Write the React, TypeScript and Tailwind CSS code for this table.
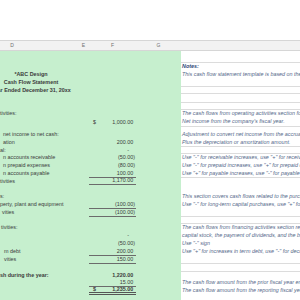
import React from "react";

type Row = {
  h: number;
  title?: string;
  label?: string;
  lx?: number;
  bold?: boolean;
  dollar?: boolean;
  value?: string;
  paren?: boolean;
  dash?: boolean;
  fb?: "single" | "double";
  note?: string;
  noteBold?: boolean;
  rb?: boolean;
};

const rows: Row[] = [
  { h: 12, rb: true },
  { h: 8, note: "Notes:", noteBold: true },
  { h: 8, title: "*ABC Design", note: "This cash flow statement template is based on the indirect method." },
  { h: 8, title: "Cash Flow Statement", rb: true },
  { h: 7, title: "Year Ended December 31, 20xx", rb: true },
  { h: 9, rb: true },
  { h: 7, rb: true },
  { h: 8, label: "tivities:", lx: 0, note: "The cash flows from operating activities section focuses on" },
  { h: 9, dollar: true, value: "1,000.00", note: "Net income from the company's fiscal year.", rb: true },
  { h: 4 },
  { h: 8, label: "net income to net cash:", lx: 3, note: "Adjustment to convert net income from the accrual basis to cash basis." },
  { h: 8, label: "ation", lx: 3, value: "200.00", note: "Plus the depreciation or amortization amount.", rb: true },
  { h: 7, label: "al:", lx: 0, dash: true, rb: true },
  { h: 8, label: "n accounts receivable", lx: 3, value: "50.00", paren: true, note: "Use \"-\" for receivable increases, use \"+\" for receivable decreases." },
  { h: 8, label: "n prepaid expenses", lx: 3, value: "80.00", paren: true, note: "Use \"-\" for prepaid increases, use \"+\" for prepaid decreases." },
  { h: 8, label: "n accounts payable", lx: 3, value: "100.00", fb: "single", note: "Use \"+\" for payable increases, use \"-\" for payable decreases.", rb: true },
  { h: 7, label: "tivities", lx: 0, value: "1,170.00", fb: "single" },
  { h: 8 },
  { h: 8, label: "s:", lx: 0, note: "This section covers cash flows related to the purchase of assets." },
  { h: 8, label: "perty, plant and equipment", lx: 0, value: "100.00", paren: true, fb: "single", note: "Use \"-\" for long-term capital purchases, use \"+\" for sales." },
  { h: 8, label: "vities", lx: 2, value: "100.00", paren: true, fb: "single", rb: true },
  { h: 7, rb: true },
  { h: 8, label: "tivities:", lx: 1, note: "The cash flows from financing activities section reports the sale of" },
  { h: 8, dash: true, note: "capital stock, the payment of dividends, and the borrowing of debt." },
  { h: 8, value: "50.00", paren: true, note: "Use \"-\" sign" },
  { h: 8, label: "m debt", lx: 4, value: "200.00", fb: "single", note: "Use \"+\" for increases in term debt, use \"-\" for decreases." },
  { h: 8, label: "vities", lx: 4, value: "150.00", fb: "single", rb: true },
  { h: 8, rb: true },
  { h: 7, label: "sh during the year:", lx: 0, bold: true, value: "1,220.00" },
  { h: 8, value: "15.00", fb: "single", note: "The cash flow amount from the prior fiscal year end." },
  { h: 8, dollar: true, bold: true, value: "1,235.00", fb: "double", note: "The cash flow amount from the reporting fiscal year end." },
  { h: 12 },
];

function Left({ r }: { r: Row }) {
  const fBorder =
    r.fb === "single"
      ? "border-b border-[#6b6b6b]"
      : r.fb === "double"
      ? "border-b-[3px] border-double border-[#555555]"
      : "";
  return (
    <div className="flex w-[181px] shrink-0 bg-[#c6efce] text-[#3b3b3b]" style={{ height: r.h }}>
      <div className="relative flex w-[78px] items-center overflow-visible">
        {r.title ? (
          <div className="flex w-[62px] justify-center whitespace-nowrap font-bold">{r.title}</div>
        ) : r.label ? (
          <span className={`whitespace-nowrap ${r.bold ? "font-bold" : ""}`} style={{ paddingLeft: r.lx ?? 0 }}>
            {r.label}
          </span>
        ) : null}
      </div>
      <div className="w-[11px]" />
      <div className={`flex w-[47px] items-center justify-between ${fBorder} ${r.bold ? "font-bold" : ""}`}>
        <span className="pl-[4px]">{r.dollar ? "$" : ""}</span>
        {r.value ? (
          <span className="whitespace-nowrap pr-[1px]">
            {r.paren ? "(" : ""}
            {r.value}
            <span className={r.paren ? "" : "invisible"}>)</span>
          </span>
        ) : r.dash ? (
          <span className="pr-[7px]">-</span>
        ) : null}
      </div>
      <div className="w-[45px]" />
    </div>
  );
}

function Right({ r }: { r: Row }) {
  return (
    <div
      className={`flex flex-1 items-center overflow-hidden whitespace-nowrap pl-[1px] italic ${
        r.rb ? "border-b border-[#dcdcdc]" : ""
      } ${r.noteBold ? "font-bold text-[#2f4a78]" : "text-[#55698a]"}`}
      style={{ height: r.h }}
    >
      {r.note}
    </div>
  );
}

export default function App() {
  return (
    <div
      className="h-[300px] w-[300px] overflow-hidden bg-white text-[5.4px] leading-none"
      style={{ fontFamily: '"Liberation Sans", Arial, sans-serif' }}
    >
      <div className="h-[40px] bg-white" />
      <div className="flex h-[11px] items-center border-y border-[#d6d6d6] bg-[#f2f2f2] text-[5px] text-[#6f6f6f]">
        <div className="flex w-[24px] justify-center">D</div>
        <div className="w-[54px]" />
        <div className="flex w-[11px] justify-center">E</div>
        <div className="flex w-[47px] justify-center">F</div>
        <div className="flex w-[45px] justify-center">G</div>
        <div className="flex-1" />
      </div>
      {rows.map((r, i) => (
        <div key={i} className="flex">
          <Left r={r} />
          <Right r={r} />
        </div>
      ))}
    </div>
  );
}
